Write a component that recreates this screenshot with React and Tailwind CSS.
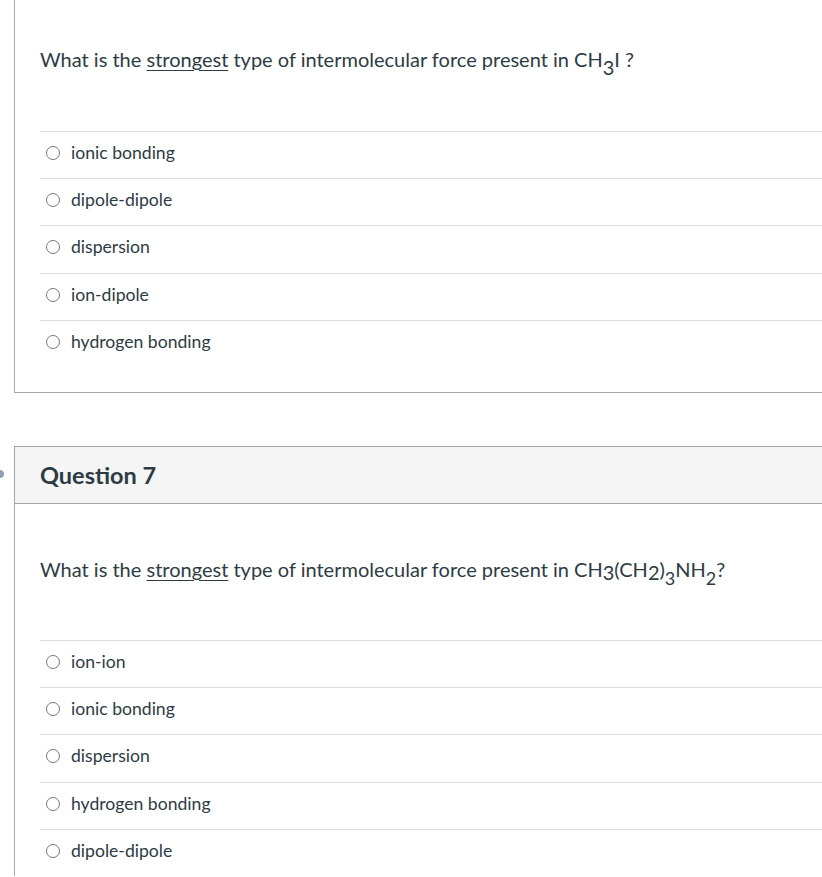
import React from 'react';

const Option = ({ label }) => (
  <div className="flex items-center h-[47.2px] pb-[4px] pl-[6px] border-t border-[#dcdcdc]">
    <span className="w-[14px] h-[14px] rounded-full border border-[#777] bg-white shrink-0" />
    <span className="ml-[11px] text-[17.6px] leading-[24px] text-[#2d3b45]">{label}</span>
  </div>
);

const Strongest = () => (
  <>
    What is the <span className="underline underline-offset-[3px] decoration-[1px]">strongest</span> type of intermolecular force present in{' '}
  </>
);

export default function App() {
  const q6 = ['ionic bonding', 'dipole-dipole', 'dispersion', 'ion-dipole', 'hydrogen bonding'];
  const q7 = ['ion-ion', 'ionic bonding', 'dispersion', 'hydrogen bonding', 'dipole-dipole'];

  return (
    <div className="w-[822px] h-[877px] overflow-hidden bg-white font-['Lato',sans-serif] text-[#2d3b45]">
      {/* question 6 (header scrolled off) */}
      <div className="ml-[14px] w-[900px] border-l border-b border-[#a5a5a5] pl-[25px] pt-[44px] pb-[25px]">
        <p className="h-[30px] text-[20px] leading-[30px]">
          <Strongest />
          CH<span className="align-[-8px] leading-[0]">3</span>I ?
        </p>
        <div className="mt-[57px]">
          {q6.map((o) => (
            <Option key={o} label={o} />
          ))}
        </div>
      </div>

      {/* question 7 */}
      <div className="relative mt-[53px] ml-[14px] w-[900px] border-l border-t border-[#a5a5a5]">
        <span className="absolute left-[-19px] top-[23px] w-[8px] h-[8px] rounded-full bg-[#8fa3b3]" />
        <div className="h-[57px] bg-[#f5f5f5] border-b border-[#a5a5a5] pl-[25px] flex items-center">
          <h2 className="text-[23.5px] font-bold leading-[30px]">Question 7</h2>
        </div>
        <div className="pl-[25px] pt-[50px]">
          <p className="h-[30px] text-[20px] leading-[30px]">
            <Strongest />
            CH<span className="align-[-3px] leading-[0]">3</span>(CH<span className="align-[-3px] leading-[0]">2</span>)
            <span className="align-[-8px] leading-[0] text-[18px]">3</span>NH
            <span className="align-[-8px] leading-[0] text-[18px]">2</span>?
          </p>
          <div className="mt-[56px]">
            {q7.map((o) => (
              <Option key={o} label={o} />
            ))}
          </div>
        </div>
      </div>
    </div>
  );
}
